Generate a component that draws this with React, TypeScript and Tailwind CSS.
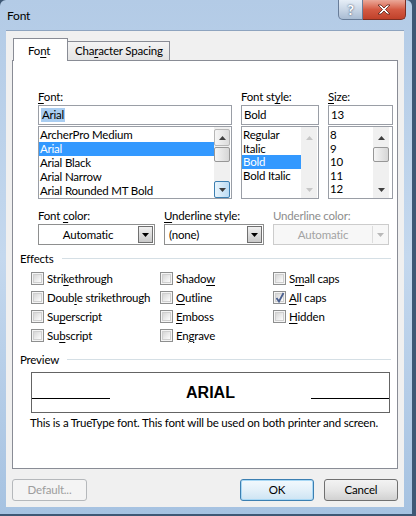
import type { ReactNode } from "react";

const U = ({ children }: { children: ReactNode }) => (
  <span className="underline decoration-[1px] underline-offset-[2px]">{children}</span>
);

function Arrow({ dir, color = "#3f3f3f" }: { dir: "up" | "down"; color?: string }) {
  return (
    <svg width="7" height="4" viewBox="0 0 7 4">
      <path d={dir === "up" ? "M0 4 L3.5 0 L7 4Z" : "M0 0 L3.5 4 L7 0Z"} fill={color} />
    </svg>
  );
}

type ArrowKind = "btn" | "hot" | "plain";

function ScrollBox({ kind, dir, color }: { kind: ArrowKind; dir: "up" | "down"; color: string }) {
  const look =
    kind === "btn"
      ? "border-[#b7b7b7] bg-gradient-to-r from-[#f6f6f6] to-[#dcdcdc]"
      : kind === "hot"
        ? "border-[#3c7fb1] bg-gradient-to-r from-[#e8f4fc] to-[#bcdcf4]"
        : "border-transparent";
  return (
    <div className={`flex h-[17px] items-center justify-center rounded-[2px] border ${look}`}>
      <Arrow dir={dir} color={color} />
    </div>
  );
}

function Scrollbar({
  up,
  down,
  thumb,
  disabled,
}: {
  up: ArrowKind;
  down: ArrowKind;
  thumb?: boolean;
  disabled?: boolean;
}) {
  const color = disabled ? "#c6c6c6" : "#3f3f3f";
  return (
    <div className="flex w-[16px] flex-col bg-[#f0f0f0] pt-[2px]">
      <ScrollBox kind={up} dir="up" color={color} />
      {thumb && (
        <div className="mt-px h-[15px] rounded-[2px] border border-[#979797] bg-gradient-to-r from-[#f5f5f5] to-[#d6d6d6]" />
      )}
      <div className="flex-1" />
      <ScrollBox kind={down} dir="down" color={color} />
    </div>
  );
}

function TextBox({ children }: { children: ReactNode }) {
  return (
    <div className="flex h-[20px] items-center border border-[#9a9ea6] bg-white pl-[2px]">{children}</div>
  );
}

function ListBox({
  items,
  selected,
  rowH,
  gap,
  bar,
}: {
  items: string[];
  selected: number;
  rowH: string;
  gap: string;
  bar: ReactNode;
}) {
  return (
    <div className="mt-px flex h-[73px] border border-[#9a9ea6] bg-white">
      <div className="flex-1 pt-px">
        {items.map((item, i) => (
          <div
            key={item}
            className={`${rowH} pl-px ${i === selected ? "bg-[#3399ff] text-white" : ""}`}
          >
            {item}
          </div>
        ))}
      </div>
      {bar}
      <div className={gap} />
    </div>
  );
}

function Combo({
  text,
  center,
  disabled,
  width,
}: {
  text: string;
  center?: boolean;
  disabled?: boolean;
  width: string;
}) {
  return (
    <div
      className={`flex h-[21px] ${width} border ${
        disabled ? "border-[#cccccc] bg-[#f7f7f7] text-[#a3a3a3]" : "border-[#8e8f8f] bg-white"
      }`}
    >
      <div className={`flex flex-1 items-center ${center ? "justify-center" : "pl-[4px]"}`}>{text}</div>
      {disabled ? (
        <div className="my-px flex w-[16px] items-center justify-center border-l border-[#dddddd]">
          <Arrow dir="down" color="#b9b9b9" />
        </div>
      ) : (
        <div className="m-px flex w-[15px] items-center justify-center border border-[#707070] bg-gradient-to-b from-[#f0f0f0] to-[#c9c9c9]">
          <Arrow dir="down" color="#000000" />
        </div>
      )}
    </div>
  );
}

function Check({ checked }: { checked?: boolean }) {
  return (
    <span className="flex h-[13px] w-[13px] shrink-0 items-center justify-center border border-[#8e8f8f] bg-[#f4f4f4]">
      <span className="relative h-[9px] w-[9px] border border-[#cfcfcf] bg-gradient-to-br from-[#d6d6d6] to-[#fdfdfd]">
        {checked && (
          <svg className="absolute -left-px -top-[2px]" width="10" height="11" viewBox="0 0 10 11">
            <path d="M1.5 6 L4 9.5 L8.5 1" fill="none" stroke="#4a5f8f" strokeWidth="1.8" />
          </svg>
        )}
      </span>
    </span>
  );
}

function Effect({ label, checked }: { label: ReactNode; checked?: boolean }) {
  return (
    <div className="flex h-[19px] items-center gap-[3px]">
      <Check checked={checked} />
      <span>{label}</span>
    </div>
  );
}

function GroupLabel({ children }: { children: ReactNode }) {
  return (
    <div className="ml-[7px] mr-[6px] flex h-[15px] items-center gap-[8px] leading-[15px]">
      <span>{children}</span>
      <div className="h-px flex-1 bg-[#d5dfe5]" />
    </div>
  );
}

function Button({ label, primary, disabled }: { label: string; primary?: boolean; disabled?: boolean }) {
  const look = disabled
    ? "border-[#b5b8bb] bg-[#f4f4f4] text-[#9d9d9d]"
    : primary
      ? "border-[#3c7fb1] bg-gradient-to-b from-[#f2f9fd] via-[#e3f0f9] to-[#cde4f3] shadow-[inset_0_0_0_1px_#a8d8f5]"
      : "border-[#707070] bg-gradient-to-b from-[#f3f3f3] via-[#e6e6e6] to-[#d1d1d1]";
  return (
    <div className={`flex h-[22px] items-center justify-center rounded-[3px] border ${look}`}>{label}</div>
  );
}

const fonts = ["ArcherPro Medium", "Arial", "Arial Black", "Arial Narrow", "Arial Rounded MT Bold"];
const styles = ["Regular", "Italic", "Bold", "Bold Italic"];
const sizes = ["8", "9", "10", "11", "12"];

export default function App() {
  return (
    <div className="h-[516px] w-[416px] overflow-hidden whitespace-nowrap bg-[#3e5875] font-['Lato',sans-serif] text-[11.5px] leading-[14px] tracking-[-0.2px] text-black">
      <div className="relative flex h-[514px] w-[412px] flex-col rounded-t-[6px] bg-gradient-to-b from-[#b3cbe6] via-[#c4d8ee] to-[#a6c2e1] pb-[7px] pl-[6px] pr-[8px]">
        <div className="flex h-[30px] items-center pl-[1px] pt-[2px] text-[12px]">Font</div>

        <div className="absolute right-[6px] top-0 flex h-[20px]">
          <div className="flex w-[25px] items-center justify-center rounded-bl-[5px] border border-t-0 border-[#687d99] bg-gradient-to-b from-[#e6eef7] via-[#c9d6e6] to-[#a9bcd3] text-[14px] font-bold text-white [text-shadow:0_0_2px_#1f3350]">
            ?
          </div>
          <div className="flex w-[43px] items-center justify-center rounded-br-[5px] border border-l-0 border-t-0 border-[#7d2e22] bg-gradient-to-b from-[#eaa899] via-[#d45a43] to-[#c0412a]">
            <svg width="14" height="11" viewBox="0 0 14 11">
              <path
                d="M1 1 L4 1 L7 4 L10 1 L13 1 L8.5 5.5 L13 10 L10 10 L7 7 L4 10 L1 10 L5.5 5.5Z"
                fill="#ffffff"
                stroke="#5a2219"
                strokeWidth="0.8"
              />
            </svg>
          </div>
        </div>

        <div className="flex flex-1 flex-col border-t border-[#8ea4bf] bg-[#f0f0f0] px-[6px] pt-[7px]">
          <div className="flex h-[22px] items-end pl-px">
            <div className="relative z-10 -mb-px flex h-[23px] w-[55px] items-center border border-b-0 border-[#898c95] bg-white pl-[14px] pt-px">
              Fo<U>n</U>t
            </div>
            <div className="flex h-[19px] w-[102px] items-center border border-b-0 border-l-0 border-[#898c95] bg-gradient-to-b from-[#f4f4f4] to-[#e3e3e3] pl-[7px]">
              Cha<U>r</U>acter Spacing
            </div>
          </div>

          <div className="flex h-[409px] flex-col border border-[#898c95] bg-white pt-[28px]">
            <div className="ml-[25px] flex gap-[9px]">
              <div className="w-[194px]">
                <div className="h-[16px] leading-[15px]">
                  <U>F</U>ont:
                </div>
                <TextBox>
                  <span className="bg-[#a9cdf1] px-px">Arial</span>
                </TextBox>
                <ListBox
                  items={fonts}
                  selected={1}
                  rowH="h-[14px] leading-[14px]"
                  gap="w-px"
                  bar={<Scrollbar up="btn" down="hot" thumb />}
                />
              </div>
              <div className="w-[78px]">
                <div className="h-[16px] leading-[15px]">
                  Font st<U>y</U>le:
                </div>
                <TextBox>Bold</TextBox>
                <ListBox
                  items={styles}
                  selected={2}
                  rowH="h-[13.5px] leading-[13.5px]"
                  gap="w-px"
                  bar={<Scrollbar up="plain" down="plain" disabled />}
                />
              </div>
              <div className="w-[65px]">
                <div className="h-[16px] leading-[15px]">
                  <U>S</U>ize:
                </div>
                <TextBox>13</TextBox>
                <ListBox
                  items={sizes}
                  selected={-1}
                  rowH="h-[13.5px] leading-[13.5px]"
                  gap="w-[3px]"
                  bar={<Scrollbar up="plain" down="plain" thumb />}
                />
              </div>
            </div>

            <div className="ml-[25px] mt-[9px] flex gap-[9px]">
              <div>
                <div className="h-[16px] leading-[15px]">
                  Font <U>c</U>olor:
                </div>
                <Combo text="Automatic" center width="w-[117px]" />
              </div>
              <div>
                <div className="h-[16px] leading-[15px]">
                  <U>U</U>nderline style:
                </div>
                <Combo text="(none)" width="w-[100px]" />
              </div>
              <div>
                <div className="h-[16px] leading-[15px] text-[#8d8d8d]">Underline color:</div>
                <Combo text="Automatic" center disabled width="w-[116px]" />
              </div>
            </div>

            <div className="mt-[6px]">
              <GroupLabel>Effects</GroupLabel>
            </div>

            <div className="ml-[18px] mt-[3px] grid grid-cols-[129px_113px_1fr]">
              <div>
                <Effect label={<>Stri<U>k</U>ethrough</>} />
                <Effect label={<>Doub<U>l</U>e strikethrough</>} />
                <Effect label={<>Su<U>p</U>erscript</>} />
                <Effect label={<>Su<U>b</U>script</>} />
              </div>
              <div>
                <Effect label={<>Shado<U>w</U></>} />
                <Effect label={<><U>O</U>utline</>} />
                <Effect label={<><U>E</U>mboss</>} />
                <Effect label={<>En<U>g</U>rave</>} />
              </div>
              <div>
                <Effect label={<>S<U>m</U>all caps</>} />
                <Effect label={<><U>A</U>ll caps</>} checked />
                <Effect label={<><U>H</U>idden</>} />
              </div>
            </div>

            <div className="mt-[7px]">
              <GroupLabel>Preview</GroupLabel>
            </div>

            <div className="ml-[18px] mt-[5px] flex h-[41px] w-[359px] items-start justify-between border border-[#646464] pt-[12px]">
              <div className="mt-[13px] h-px w-[78px] bg-black" />
              <div className="font-['Liberation_Sans',Arial,sans-serif] text-[16px] font-bold leading-[16px] tracking-normal">
                ARIAL
              </div>
              <div className="mt-[13px] h-px w-[78px] bg-black" />
            </div>

            <div className="ml-[17px] mt-[3px]">
              This is a TrueType font. This font will be used on both printer and screen.
            </div>
          </div>

          <div className="mt-[10px] flex">
            <div className="w-[75px]">
              <Button label="Default..." disabled />
            </div>
            <div className="flex-1" />
            <div className="w-[74px]">
              <Button label="OK" primary />
            </div>
            <div className="ml-[10px] w-[74px]">
              <Button label="Cancel" />
            </div>
          </div>
        </div>
      </div>
    </div>
  );
}
